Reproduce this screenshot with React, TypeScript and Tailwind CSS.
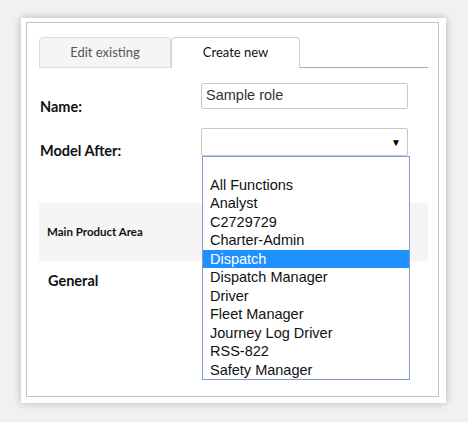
import React from "react";

const roles = [
  "",
  "All Functions",
  "Analyst",
  "C2729729",
  "Charter-Admin",
  "Dispatch",
  "Dispatch Manager",
  "Driver",
  "Fleet Manager",
  "Journey Log Driver",
  "RSS-822",
  "Safety Manager",
];

const label = "font-['Lato','Open_Sans',sans-serif] font-bold text-[14.5px] text-[#111]";

export default function App() {
  return (
    <div className="w-[468px] h-[422px] bg-[#f1f1f1] pt-[18px] pl-[21px]">
      <div className="w-[425px] h-[385px] bg-white shadow-[0_0_8px_rgba(0,0,0,0.25)] pt-[4px] pl-[5px]">
        <div className="relative w-[413px] h-[375px] border border-[#c4c4c4] pt-[14px] pl-[12px] pr-[10px]">
          {/* Tabs */}
          <div className="flex items-end h-[31px] font-['Lato','Open_Sans',sans-serif] text-[13px]">
            <div className="w-[132px] h-[31px] flex items-center justify-center bg-[#f5f5f5] border border-[#dcdcdc] rounded-t-[4px] text-[#555]">
              Edit existing
            </div>
            <div className="w-[129px] h-[31px] flex items-center justify-center bg-white border border-b-0 border-[#cfcfcf] rounded-t-[4px] text-[#111]">
              Create new
            </div>
            <div className="flex-1 border-b border-[#a9a9a9]" />
          </div>

          {/* Name */}
          <div className="flex mt-[15px] h-[26px]">
            <div className={`${label} w-[162px] pl-[1px] pt-[13px]`}>Name:</div>
            <div className="w-[207px] h-[26px] border border-[#c8c8c8] rounded-[2px] flex items-center pl-[4px] font-['Liberation_Sans',Arial,sans-serif] text-[14.5px] text-[#333]">
              Sample role
            </div>
          </div>

          {/* Model After */}
          <div className="flex mt-[19px] h-[28px]">
            <div className={`${label} w-[162px] pl-[1px] pt-[12px]`}>Model After:</div>
            <div className="w-[207px] h-[28px] border border-[#c8c8c8] rounded-[2px] flex items-center justify-end pr-[6px] text-[10px] text-[#000]">
              ▼
            </div>
          </div>

          {/* Main Product Area */}
          <div className="mt-[47px] h-[58px] bg-[#f5f5f5] flex items-center pl-[8px]">
            <span className="font-['Lato','Open_Sans',sans-serif] font-bold text-[11.5px] text-[#111]">
              Main Product Area
            </span>
          </div>

          <div className={`${label} pl-[9px] mt-[9px]`}>General</div>

          {/* Open dropdown list */}
          <div className="absolute left-[175px] top-[133px] w-[208px] border border-[#7f9fd4] bg-white font-['Liberation_Sans',Arial,sans-serif] text-[14.5px] text-[#111]">
            {roles.map((r, i) => (
              <div
                key={i}
                className={`h-[18.5px] leading-[18px] pl-[7px] ${
                  r === "Dispatch" ? "bg-[#1e90ff] text-white" : ""
                }`}
              >
                {r}
              </div>
            ))}
          </div>
        </div>
      </div>
    </div>
  );
}
